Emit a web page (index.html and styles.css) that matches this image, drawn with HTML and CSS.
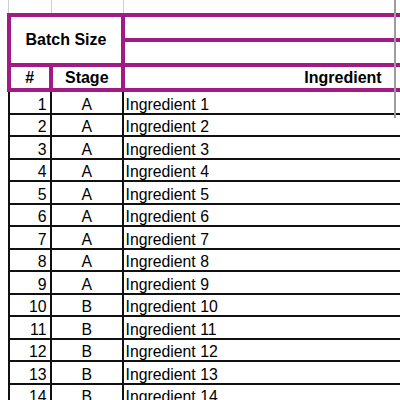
FILE: index.html
```html
<!DOCTYPE html>
<html>
<head>
<meta charset="utf-8">
<link rel="stylesheet" href="styles.css">
</head>
<body>
<div class="sheet">
  <div class="topstrip">
    <div class="tcell"></div>
    <div class="tcell"></div>
    <div class="tcell"></div>
  </div>
  <div class="header">
    <div class="hcell batch">Batch Size</div>
    <div class="hcell"></div>
    <div class="hcell"></div>
    <div class="hcell">#</div>
    <div class="hcell">Stage</div>
    <div class="hcell">Ingredient</div>
  </div>
  <div class="rows">
    <div class="row"><div class="c n">1</div><div class="c s">A</div><div class="c i">Ingredient 1</div></div>
    <div class="row"><div class="c n">2</div><div class="c s">A</div><div class="c i">Ingredient 2</div></div>
    <div class="row"><div class="c n">3</div><div class="c s">A</div><div class="c i">Ingredient 3</div></div>
    <div class="row"><div class="c n">4</div><div class="c s">A</div><div class="c i">Ingredient 4</div></div>
    <div class="row"><div class="c n">5</div><div class="c s">A</div><div class="c i">Ingredient 5</div></div>
    <div class="row"><div class="c n">6</div><div class="c s">A</div><div class="c i">Ingredient 6</div></div>
    <div class="row"><div class="c n">7</div><div class="c s">A</div><div class="c i">Ingredient 7</div></div>
    <div class="row"><div class="c n">8</div><div class="c s">A</div><div class="c i">Ingredient 8</div></div>
    <div class="row"><div class="c n">9</div><div class="c s">A</div><div class="c i">Ingredient 9</div></div>
    <div class="row"><div class="c n">10</div><div class="c s">B</div><div class="c i">Ingredient 10</div></div>
    <div class="row"><div class="c n">11</div><div class="c s">B</div><div class="c i">Ingredient 11</div></div>
    <div class="row"><div class="c n">12</div><div class="c s">B</div><div class="c i">Ingredient 12</div></div>
    <div class="row"><div class="c n">13</div><div class="c s">B</div><div class="c i">Ingredient 13</div></div>
    <div class="row"><div class="c n">14</div><div class="c s">B</div><div class="c i">Ingredient 14</div></div>
    <div class="row"><div class="c n">15</div><div class="c s">B</div><div class="c i">Ingredient 15</div></div>
  </div>
  <div class="vline"></div>
</div>
</body>
</html>
```
FILE: styles.css
```css
html, body {
  margin: 0;
  padding: 0;
  background: #fff;
  overflow: hidden;
}
.sheet {
  position: relative;
  width: 400px;
  height: 400px;
  overflow: hidden;
  font-family: "Liberation Sans", Arial, sans-serif;
  color: #000;
}
.topstrip {
  display: grid;
  grid-template-columns: 43px 72px 271px;
  height: 13px;
  margin-left: 8px;
}
.tcell {
  border-left: 1px solid #cfcfcf;
}
.header {
  display: grid;
  grid-template-columns: 41.5px 72.5px 440px;
  grid-template-rows: 25.17px 25.17px 25.17px;
  width: 558px;
  margin-left: 7px;
  border: 2px solid #a21a84;
  box-sizing: border-box;
}
.hcell {
  box-sizing: border-box;
  border: 2px solid #a21a84;
  display: flex;
  align-items: center;
  justify-content: center;
  font-weight: bold;
  font-size: 16px;
}
.batch {
  grid-column: 1 / 3;
  grid-row: 1 / 3;
}
.rows {
  margin-left: 8px;
}
.row {
  display: grid;
  grid-template-columns: 41.5px 72.5px 440px;
  height: 22.47px;
}
.c {
  box-sizing: border-box;
  height: 22.47px;
  border-left: 2px solid #111;
  border-bottom: 2px solid #111;
  font-size: 15.8px;
  line-height: 17.17px;
  padding-top: 3.5px;
  white-space: nowrap;
}
.n {
  text-align: right;
  padding-right: 3px;
}
.s {
  text-align: center;
}
.i {
  padding-left: 1.5px;
}
.vline {
  position: absolute;
  left: 394px;
  top: 0;
  width: 2px;
  height: 118px;
  background: #9c9c9c;
}
```
